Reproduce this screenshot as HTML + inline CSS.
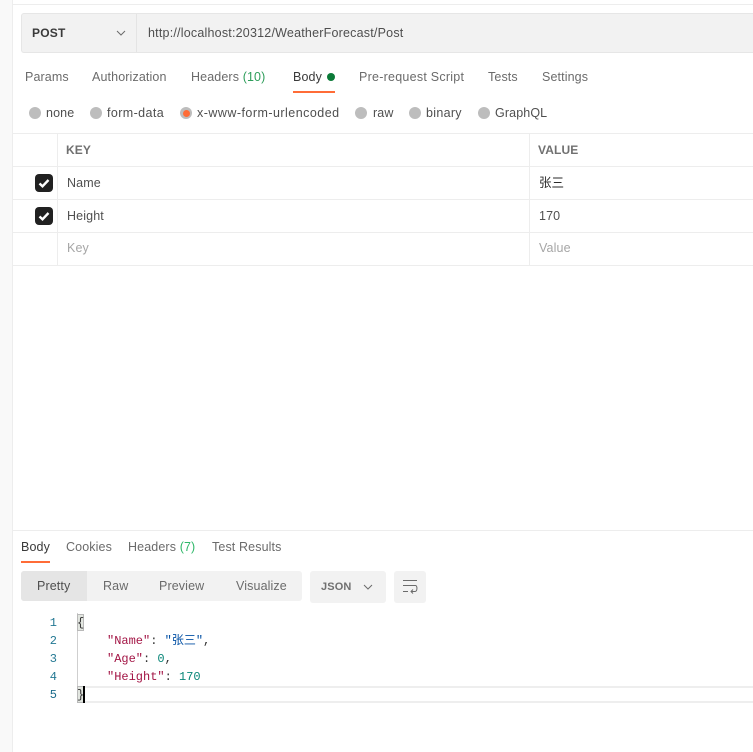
<!DOCTYPE html>
<html><head><meta charset="utf-8">
<style>
html,body{margin:0;padding:0;background:#fff}
body{width:753px;height:752px;position:relative;overflow:hidden;font-family:"Liberation Sans","Noto Sans CJK SC",sans-serif;font-size:12.5px;color:#6b6b6b}
.a{position:absolute;white-space:nowrap}
.t{position:absolute;white-space:nowrap;line-height:16px;height:16px;letter-spacing:.12px}
.b{position:absolute;background:#ededed}
.r{position:absolute;width:12px;height:12px;border-radius:50%;background:#bdbdbd}
.cb{position:absolute;left:35px;width:18px;height:18px;border-radius:4px;background:#212121}
.m{position:absolute;white-space:pre;font-family:"Liberation Mono","Noto Sans CJK SC",monospace;font-size:12px;line-height:18px;height:18px}
.n{color:#237893;left:30px;width:27px;text-align:right}
.k{color:#a31545}.s{color:#0451a5}.d{color:#098678}.p{color:#333}
</style></head><body>
<div class="a" style="left:0;top:0;width:12px;height:752px;background:#f9f9f9"></div>
<div class="b" style="left:12px;top:0;width:1px;height:752px"></div>
<div class="b" style="left:13px;top:4px;width:740px;height:1px"></div>

<div class="a" style="left:21px;top:13px;width:732px;height:40px;box-sizing:border-box;background:#f2f2f2;border:1px solid #e6e6e6;border-right:0;border-radius:3px 0 0 3px"></div>
<div class="b" style="left:136px;top:14px;width:1px;height:38px;background:#e4e4e4"></div>
<div class="t" style="left:32px;top:25px;font-size:12px;font-weight:bold;color:#3a3a3a;letter-spacing:.2px">POST</div>
<svg class="a" style="left:116px;top:30px" width="10" height="6" viewBox="0 0 10 6"><path d="M1 1l4 4 4-4" fill="none" stroke="#6b6b6b" stroke-width="1"/></svg>
<div class="t" style="left:148px;top:25px;color:#4f4f4f;letter-spacing:.21px">http://localhost:20312/WeatherForecast/Post</div>

<div class="t" style="left:25px;top:69px">Params</div>
<div class="t" style="left:92px;top:69px">Authorization</div>
<div class="t" style="left:191px;top:69px">Headers <span style="color:#2f9e5b">(10)</span></div>
<div class="t" style="left:293px;top:69px;color:#3a3a3a">Body</div>
<div class="a" style="left:327px;top:73px;width:8px;height:8px;border-radius:50%;background:#0b7a38"></div>
<div class="a" style="left:293px;top:91px;width:42px;height:2px;background:#ff6c37"></div>
<div class="t" style="left:359px;top:69px;letter-spacing:.25px">Pre-request Script</div>
<div class="t" style="left:488px;top:69px">Tests</div>
<div class="t" style="left:542px;top:69px">Settings</div>

<div class="r" style="left:29px;top:107px"></div>
<div class="t" style="left:46px;top:105px;color:#4f4f4f">none</div>
<div class="r" style="left:90px;top:107px"></div>
<div class="t" style="left:107px;top:105px;color:#4f4f4f;letter-spacing:.4px">form-data</div>
<div class="r" style="left:180px;top:107px"></div>
<div class="a" style="left:183px;top:110px;width:7px;height:7px;border-radius:50%;background:#ff6c37"></div>
<div class="t" style="left:197px;top:105px;color:#4f4f4f;letter-spacing:.47px">x-www-form-urlencoded</div>
<div class="r" style="left:355px;top:107px"></div>
<div class="t" style="left:373px;top:105px;color:#4f4f4f">raw</div>
<div class="r" style="left:409px;top:107px"></div>
<div class="t" style="left:426px;top:105px;color:#4f4f4f;letter-spacing:.3px">binary</div>
<div class="r" style="left:478px;top:107px"></div>
<div class="t" style="left:495px;top:105px;color:#4f4f4f">GraphQL</div>

<div class="b" style="left:13px;top:133px;width:740px;height:1px"></div>
<div class="b" style="left:13px;top:166px;width:740px;height:1px"></div>
<div class="b" style="left:13px;top:199px;width:740px;height:1px"></div>
<div class="b" style="left:13px;top:232px;width:740px;height:1px"></div>
<div class="b" style="left:13px;top:265px;width:740px;height:1px"></div>
<div class="b" style="left:57px;top:133px;width:1px;height:132px"></div>
<div class="b" style="left:529px;top:133px;width:1px;height:132px"></div>

<div class="t" style="left:66px;top:142px;font-size:12px;font-weight:bold;color:#707070">KEY</div>
<div class="t" style="left:538px;top:142px;font-size:12px;font-weight:bold;color:#707070">VALUE</div>

<div class="cb" style="top:174px"></div>
<svg class="a" style="left:35px;top:174px" width="18" height="18" viewBox="0 0 18 18"><path d="M4.500 9.500l3 2.800L13.500 6" fill="none" stroke="#fff" stroke-width="2.400"/></svg>
<div class="cb" style="top:207px"></div>
<svg class="a" style="left:35px;top:207px" width="18" height="18" viewBox="0 0 18 18"><path d="M4.500 9.500l3 2.800L13.500 6" fill="none" stroke="#fff" stroke-width="2.400"/></svg>

<div class="t" style="left:67px;top:175px;color:#505050">Name</div>
<div class="t" style="left:539px;top:175px;color:#2a2a2a;font-size:12.5px;letter-spacing:0">张三</div>
<div class="t" style="left:67px;top:208px;color:#505050">Height</div>
<div class="t" style="left:539px;top:208px;color:#505050">170</div>
<div class="t" style="left:67px;top:240px;color:#a6a6a6">Key</div>
<div class="t" style="left:539px;top:240px;color:#a6a6a6">Value</div>

<div class="b" style="left:13px;top:530px;width:740px;height:1px"></div>
<div class="t" style="left:21px;top:539px;color:#3a3a3a">Body</div>
<div class="a" style="left:21px;top:561px;width:29px;height:2px;background:#ff6c37"></div>
<div class="t" style="left:66px;top:539px">Cookies</div>
<div class="t" style="left:128px;top:539px">Headers <span style="color:#2fb869">(7)</span></div>
<div class="t" style="left:212px;top:539px">Test Results</div>

<div class="a" style="left:21px;top:571px;width:281px;height:30px;background:#f2f2f2;border-radius:3px"></div>
<div class="a" style="left:21px;top:571px;width:66px;height:30px;background:#e5e5e5;border-radius:3px 0 0 3px"></div>
<div class="t" style="left:37px;top:578px;color:#4f4f4f">Pretty</div>
<div class="t" style="left:103px;top:578px">Raw</div>
<div class="t" style="left:159px;top:578px">Preview</div>
<div class="t" style="left:236px;top:578px">Visualize</div>

<div class="a" style="left:310px;top:571px;width:76px;height:32px;background:#f2f2f2;border-radius:3px"></div>
<div class="t" style="left:321px;top:579px;font-weight:bold;color:#707070;font-size:11px">JSON</div>
<svg class="a" style="left:363px;top:584px" width="10" height="6" viewBox="0 0 10 6"><path d="M1 1l4 4 4-4" fill="none" stroke="#6b6b6b" stroke-width="1"/></svg>
<div class="a" style="left:394px;top:571px;width:32px;height:32px;background:#f2f2f2;border-radius:3px"></div>
<svg class="a" style="left:402px;top:580px" width="16" height="15" viewBox="0 0 16 15"><path d="M1 .5h14M1 5.500h12.500c2 0 2 6-.5 6H9M11 9.500l-2 2 2 2M1 11.500h5" fill="none" stroke="#6b6b6b" stroke-width="1"/></svg>

<div class="b" style="left:77px;top:613px;width:1px;height:90px;background:#cfcfcf"></div>
<div class="a" style="left:78px;top:686px;width:675px;height:17px;box-sizing:border-box;border-top:2px solid #eeeeee;border-bottom:2px solid #eeeeee"></div>
<div class="a" style="left:77px;top:614px;width:7px;height:17px;box-sizing:border-box;background:#e2e6e0;border:1px solid #b9b9b9"></div>
<div class="a" style="left:77px;top:686px;width:7px;height:17px;box-sizing:border-box;background:#e2e6e0;border:1px solid #b9b9b9"></div>
<div class="a" style="left:83px;top:686px;width:2px;height:17px;background:#000"></div>

<div class="m n" style="top:614px">1</div>
<div class="m n" style="top:632px">2</div>
<div class="m n" style="top:650px">3</div>
<div class="m n" style="top:668px">4</div>
<div class="m n" style="top:686px;color:#1a6a8a">5</div>
<div class="m p" style="left:77px;top:614px">{</div>
<div class="m" style="left:107px;top:632px"><span class="k">"Name"</span><span class="p">: </span><span class="s">"张三"</span><span class="p">,</span></div>
<div class="m" style="left:107px;top:650px"><span class="k">"Age"</span><span class="p">: </span><span class="d">0</span><span class="p">,</span></div>
<div class="m" style="left:107px;top:668px"><span class="k">"Height"</span><span class="p">: </span><span class="d">170</span></div>
<div class="m p" style="left:77px;top:686px">}</div>
</body></html>
